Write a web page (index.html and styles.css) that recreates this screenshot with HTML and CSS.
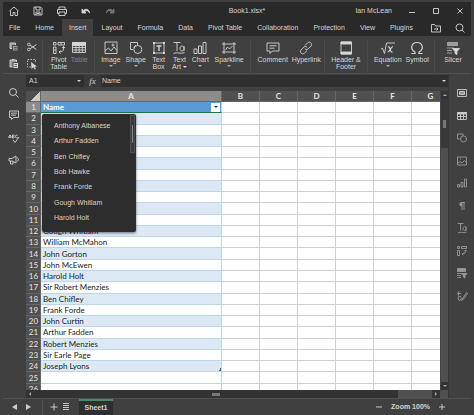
FILE: index.html
```
<!DOCTYPE html>
<html lang="en">
<head>
<meta charset="utf-8">
<title>Book1.xlsx</title>
<link rel="stylesheet" href="styles.css">
</head>
<body>
<div class="app">
  <header class="top">
    <div class="titlebar">
      <div class="quick">
        <button aria-label="Home"><svg viewBox="0 0 12 12"><path d="M1.500 6 6 2l4.500 4M2.500 5.500V10.500h2.500V7.500h2v3h2.500V5.500"/></svg></button>
        <button aria-label="Save"><svg viewBox="0 0 12 12"><path d="M2 2h6.500L10 3.500V10H2zM4 2v3h4V2M4 10V7h4v3M4.500 8.500h3"/></svg></button>
        <button aria-label="Print"><svg viewBox="0 0 12 12"><path d="M3 4.500V2h6v2.500M3 8.500H1.500v-4h9v4H9M3 7h6v3.500H3z"/></svg></button>
        <button aria-label="Undo"><svg viewBox="0 0 12 12"><path class="fill" d="M2 4v4h4L4.600 6.600C6.500 5 8.500 5.500 9.500 8 9.500 4.500 6 3.200 3.400 5.400z"/></svg></button>
        <button aria-label="Redo" class="dim"><svg viewBox="0 0 12 12"><path class="fill" d="M10 4v4H6l1.400-1.400C5.500 5 3.500 5.500 2.500 8 2.500 4.500 6 3.200 8.600 5.400z"/></svg></button>
      </div>
      <h1 class="doc">Book1.xlsx*</h1>
      <div class="win">
        <span class="user">Ian McLean</span>
        <button aria-label="Minimize"><svg viewBox="0 0 12 12"><path d="M3 7.500h6"/></svg></button>
        <button aria-label="Maximize"><svg viewBox="0 0 12 12"><path d="M3.500 3.500h5v5h-5z"/></svg></button>
        <button aria-label="Close"><svg viewBox="0 0 12 12"><path d="m3.500 3.500 5 5m0-5-5 5"/></svg></button>
      </div>
    </div>
    <nav class="tabs">
      <button>File</button><button>Home</button><button class="on">Insert</button><button>Layout</button><button>Formula</button><button>Data</button><button>Pivot Table</button><button>Collaboration</button><button>Protection</button><button>View</button><button>Plugins</button>
      <div class="tabtools">
        <button aria-label="Open file location"><svg viewBox="0 0 12 12"><path d="M1.500 10V2.500h3l1 1.500h5v6zM4 7h4M6.500 5.500 8 7 6.500 8.500"/></svg></button>
        <button aria-label="Search"><svg viewBox="0 0 12 12"><circle cx="5.500" cy="5.500" r="3.500"/><path d="m8 8 2.500 2.500"/></svg></button>
      </div>
    </nav>
  </header>

  <div class="ribbon">
    <div class="group clip">
      <button aria-label="Copy"><svg viewBox="0 0 12 12"><path class="soft" d="M2 2h5.500v5.500H2z"/><path class="soft" stroke="#404040" d="M4.500 4.500H10V10H4.500z"/><path d="M6 6.500h3M6 8.200h3" stroke="#555"/></svg></button>
      <button aria-label="Cut"><svg viewBox="0 0 12 12"><circle cx="2.800" cy="3.500" r="1.300"/><circle cx="2.800" cy="8.500" r="1.300"/><path d="m4 4.200 6.500 4.300M4 7.800l6.500-4.300"/></svg></button>
      <button aria-label="Paste"><svg viewBox="0 0 12 12"><path class="soft" d="M2 2h6.500v7H2z"/><path d="M4 1.500h2.500"/><path class="fill" stroke="#404040" d="M5 4.500h5.500v6H5z"/><path d="M6.500 6.500h2.500M6.500 8.500h2.500" stroke="#555"/></svg></button>
      <button aria-label="Select"><svg viewBox="0 0 12 12"><path stroke-dasharray="1.500 1.300" d="M5 9H1.500V1.500H9.500V5"/><path class="fill" stroke="none" d="m5 4 6 4.500-2.300.2L10 11 8.700 11.500 7.500 9.300 5.500 11z"/></svg></button>
    </div>
    <div class="group pivot">
      <button><svg viewBox="0 0 14 14"><path d="M1.500 1.500h2.500V4H1.500zM6 1.500h6.500V4H6zM9 1.500V4M1.500 6h2.500v6.500H1.500zM1.500 9H4M11.500 5.500v2.500q0 3-4.500 3M10 7l1.500-1.500L13 7M8.500 9.500 7 11l1.500 1.500"/></svg><span>Pivot<br>Table</span></button>
      <button class="off"><svg viewBox="0 0 14 14"><path class="fill" d="M.5 1.500h13v3H.5z"/><path d="M.5 1.500h13v10H.5zM.5 6.500h13M.5 9h13M4 4v7.500M7.200 4v7.500M10.400 4v7.500"/></svg><span>Table</span></button>
    </div>
    <div class="group draw">
      <button><svg viewBox="0 0 14 14"><path d="M1 1h12v11.500H1zM1 10l3.500-3 2.500 3 3-4 3 3.500"/><circle cx="9" cy="4" r="1"/></svg><span>Image</span><i></i></button>
      <button><svg viewBox="0 0 14 14"><path d="M4 8.500H1.500v-7h7V4M4.500 6.500 7 4"/><circle cx="8.800" cy="8.500" r="4"/></svg><span>Shape</span><i></i></button>
      <button><svg viewBox="0 0 14 14"><path d="M2 2h10v10H2z"/><path class="fill" stroke="none" d="M1 1h2v2H1zM11 1h2v2h-2zM1 11h2v2H1zM11 11h2v2h-2z"/><path stroke-width="1.400" d="M4.500 5h5M7 5v5"/></svg><span>Text<br>Box</span></button>
      <button><svg viewBox="0 0 14 14"><path d="M1.500 1.500h7M5 1.500v8.500M12 5v5M12 7.500c0-3.300-4-3.300-4 0s4 3.300 4 0M1.500 12.500c4-2 7 1 11-1"/></svg><span>Text<br>Art <b class="caret"></b></span></button>
      <button><svg viewBox="0 0 14 14"><path d="M1 8h3v4.500H1zM5.500 5h3v7.500h-3zM10 1.500h3v11h-3z"/></svg><span>Chart</span><i></i></button>
      <button><svg viewBox="0 0 14 14"><path d="M0 3h14M0 11h14M2 1v12M12 1v12M3.500 9 5.500 6l2 2L10.500 5"/></svg><span>Sparkline</span><i></i></button>
    </div>
    <div class="group link">
      <button><svg viewBox="0 0 14 14"><path d="M1 2h12v8H6.500L4 12.500V10H1zM3.500 4.800h7M3.500 7.200h5"/></svg><span>Comment</span></button>
      <button><svg viewBox="0 0 14 14"><path d="M6 4.500 8.700 1.800c2-2 5.300 1.200 3.300 3.300L9.200 7.800C8 9 6.500 8.500 5.800 7.500M8 9.500 5.300 12.200c-2 2-5.300-1.200-3.300-3.300L4.800 6.200C6 5 7.500 5.500 8.200 6.500"/></svg><span>Hyperlink</span></button>
    </div>
    <div class="group one">
      <button><svg viewBox="0 0 14 14"><path d="M2 1h10.500v12H2z"/><path class="fill" d="M2 1h10.500v2H2zM2 11h10.500v2H2z"/></svg><span>Header &amp;<br>Footer</span></button>
    </div>
    <div class="group sym">
      <button><svg viewBox="0 0 14 14"><path d="m0 8 1.500-.8L3.500 12.500 5.500 2H14"/><path stroke-width="1.200" d="M7 6c2.500-1.200 2 6 4.500 5M12 5.500C10 5.500 9 11 6.500 11"/></svg><span>Equation</span><i></i></button>
      <button><svg viewBox="0 0 14 14"><path stroke-width="1.200" d="M1.500 12.500H5V11C-.5 8 1.500 1.500 7 1.500S14.500 8 9 11v1.500h3.500"/></svg><span>Symbol</span></button>
    </div>
    <div class="group one">
      <button><svg viewBox="0 0 14 14"><path class="soft" stroke="#aaa" d="M1.500 1.500h10v3h-10z"/><path stroke="#aaa" d="M1 7h7M1 9.500h5M1 12h5"/><path class="fill" d="M6.500 7.500h7L11 10.500V13.500l-2-1V10.500z"/></svg><span>Slicer</span></button>
    </div>
  </div>

  <div class="work">
    <aside class="side left">
      <button aria-label="Find"><svg viewBox="0 0 12 12"><circle cx="5" cy="5" r="3.500"/><path d="m7.500 7.500 3 3"/></svg></button>
      <button aria-label="Comments"><svg viewBox="0 0 12 12"><path d="M1.500 2h9v6.500H5.500L3.500 10.500v-2h-2zM3 4.200h6M3 6.200h5"/></svg></button>
      <button aria-label="Spelling"><svg viewBox="0 0 12 12"><path d="M1 6V4l1-1 1 1v2M1 5h2M4.500 6V3h1.200q1 .8 0 1.500.9.800 0 1.500zM9.500 3.500C8 2.500 7.500 3.500 7.500 4.500S8.500 6.500 9.500 5.500M5 8l2 2.500L11 5"/></svg></button>
      <button aria-label="Feedback"><svg viewBox="0 0 12 12"><path d="M1 4.500h3L8 2v7L4 7H1zM2.500 7v3h2.500V7.500M9.500 3.500q2 2 0 4"/></svg></button>
    </aside>

    <main class="center">
      <div class="formula">
        <input class="ref" aria-label="Cell reference" value="A1">
        <b class="caret"></b>
        <button class="fx" aria-label="Insert function">fx</button>
        <input class="expr" aria-label="Formula" value="Name">
        <b class="caret"></b>
      </div>
      <div class="view">
        <div class="sheet">
          <table>
            <colgroup><col class="num"><col class="wide"><col class="col"><col class="col"><col class="col"><col class="col"><col class="col"><col class="col"></colgroup>
            <thead><tr><th class="corner"></th><th class="sel">A</th><th>B</th><th>C</th><th>D</th><th>E</th><th>F</th><th>G</th></tr></thead>
            <tbody>
              <tr class="head"><th class="sel">1</th><td><div class="cell">Name<button class="filter" aria-label="Filter"><b class="caret"></b></button></div></td><td></td><td></td><td></td><td></td><td></td><td></td></tr>
              <tr class="band"><th>2</th><td></td><td></td><td></td><td></td><td></td><td></td><td></td></tr>
              <tr><th>3</th><td></td><td></td><td></td><td></td><td></td><td></td><td></td></tr>
              <tr class="band"><th>4</th><td></td><td></td><td></td><td></td><td></td><td></td><td></td></tr>
              <tr><th>5</th><td></td><td></td><td></td><td></td><td></td><td></td><td></td></tr>
              <tr class="band"><th>6</th><td></td><td></td><td></td><td></td><td></td><td></td><td></td></tr>
              <tr><th>7</th><td></td><td></td><td></td><td></td><td></td><td></td><td></td></tr>
              <tr class="band"><th>8</th><td></td><td></td><td></td><td></td><td></td><td></td><td></td></tr>
              <tr><th>9</th><td></td><td></td><td></td><td></td><td></td><td></td><td></td></tr>
              <tr class="band"><th>10</th><td></td><td></td><td></td><td></td><td></td><td></td><td></td></tr>
              <tr><th>11</th><td></td><td></td><td></td><td></td><td></td><td></td><td></td></tr>
              <tr class="band"><th>12</th><td>Gough Whitlam</td><td></td><td></td><td></td><td></td><td></td><td></td></tr>
              <tr><th>13</th><td>William McMahon</td><td></td><td></td><td></td><td></td><td></td><td></td></tr>
              <tr class="band"><th>14</th><td>John Gorton</td><td></td><td></td><td></td><td></td><td></td><td></td></tr>
              <tr><th>15</th><td>John McEwen</td><td></td><td></td><td></td><td></td><td></td><td></td></tr>
              <tr class="band"><th>16</th><td>Harold Holt</td><td></td><td></td><td></td><td></td><td></td><td></td></tr>
              <tr><th>17</th><td>Sir Robert Menzies</td><td></td><td></td><td></td><td></td><td></td><td></td></tr>
              <tr class="band"><th>18</th><td>Ben Chifley</td><td></td><td></td><td></td><td></td><td></td><td></td></tr>
              <tr><th>19</th><td>Frank Forde</td><td></td><td></td><td></td><td></td><td></td><td></td></tr>
              <tr class="band"><th>20</th><td>John Curtin</td><td></td><td></td><td></td><td></td><td></td><td></td></tr>
              <tr><th>21</th><td>Arthur Fadden</td><td></td><td></td><td></td><td></td><td></td><td></td></tr>
              <tr class="band"><th>22</th><td>Robert Menzies</td><td></td><td></td><td></td><td></td><td></td><td></td></tr>
              <tr><th>23</th><td>Sir Earle Page</td><td></td><td></td><td></td><td></td><td></td><td></td></tr>
              <tr class="band last"><th>24</th><td>Joseph Lyons</td><td></td><td></td><td></td><td></td><td></td><td></td></tr>
              <tr><th>25</th><td></td><td></td><td></td><td></td><td></td><td></td><td></td></tr>
              <tr><th>26</th><td></td><td></td><td></td><td></td><td></td><td></td><td></td></tr>
            </tbody>
          </table>
          <div class="menu">
            <ul>
              <li><button>Anthony Albanese</button></li>
              <li><button>Arthur Fadden</button></li>
              <li><button>Ben Chifley</button></li>
              <li><button>Bob Hawke</button></li>
              <li><button>Frank Forde</button></li>
              <li><button>Gough Whitlam</button></li>
              <li><button>Harold Holt</button></li>
            </ul>
            <div class="menubar"></div>
          </div>
        </div>
        <div class="vbar">
          <button aria-label="Scroll up"><b class="caret up"></b></button>
          <div class="vthumb"></div>
          <button aria-label="Scroll down"><b class="caret"></b></button>
        </div>
        <div class="hbar">
          <button aria-label="Scroll left"><b class="caret west"></b></button>
          <div class="hthumb"></div>
          <button aria-label="Scroll right"><b class="caret east"></b></button>
        </div>
      </div>
    </main>

    <aside class="side right">
      <button aria-label="Cell settings" class="bright"><svg viewBox="0 0 12 12"><path d="M1.500 2.500h9v7h-9z"/><path class="soft" d="M3.500 4.500h5v3h-5z"/></svg></button>
      <button aria-label="Table settings" class="bright"><svg viewBox="0 0 12 12"><path class="fill" d="M1.500 2.500h9V4h-9z"/><path d="M1.500 2.500h9v7h-9zM1.500 6.500h9M4.500 4v5.500M7.500 4v5.500"/></svg></button>
      <button aria-label="Shape settings"><svg viewBox="0 0 12 12"><path d="M4 7H1.500V2H7v2"/><circle cx="7.500" cy="7" r="3"/></svg></button>
      <button aria-label="Image settings"><svg viewBox="0 0 12 12"><path d="M1.500 2h9v8h-9zM1.500 8.500 4 6.500l2 1.500 2.500-2.500 2 2"/><path d="M4 4h1"/></svg></button>
      <button aria-label="Chart settings"><svg viewBox="0 0 12 12"><path d="M1.500 7.500h2V10h-2zM5 5.500h2V10H5zM8.500 2h2v8h-2z"/></svg></button>
      <button aria-label="Paragraph settings"><svg viewBox="0 0 12 12"><path class="fill" stroke="none" d="M6 2C2.500 2 2.500 6.500 6 6.500z"/><path d="M5.500 2.500H9M6 2v8M8 2v8"/></svg></button>
      <button aria-label="Text art settings"><svg viewBox="0 0 12 12"><path d="M1.500 1.500h6M4.500 1.500v7M10 4.500V9M10 6.500c0-2.700-3-2.700-3 0s3 2.700 3 0M2 10.800c3-1.600 5 .8 8.500-.6"/></svg></button>
      <button aria-label="Pivot table settings"><svg viewBox="0 0 12 12"><path d="M1.500 1.500h2v2h-2zM5.500 1.500h5v2h-5zM1.500 5.500h2v5h-2zM9.500 5v1.500q0 2.500-3.500 2.500M8.300 6.300 9.500 5l1.200 1.300M7.300 7.800 6 9l1.300 1.300"/></svg></button>
      <button aria-label="Slicer settings"><svg viewBox="0 0 12 12"><path class="soft" d="M1.500 1.500h8v3h-8z"/><path d="M1 6.500h5M1 8.500h4M1 10.500h4"/><path class="fill" d="M5.500 6.500h5.500L9 8.800V11L7.500 10.200V8.800z"/></svg></button>
      <button aria-label="Signature settings"><svg viewBox="0 0 12 12"><path d="M3 1C2.500 4 1.500 9 3 10.500 5.500 11.500 6.500 5.500 3 6.500M1 3.500h4M5.500 10.500 7 8l3.500-5.500 1 .8L8 8.700z"/></svg></button>
    </aside>
  </div>

  <footer class="status">
    <div class="nav"><button aria-label="Previous sheet"><b class="tri west"></b></button><button aria-label="Next sheet"><b class="tri"></b></button></div>
    <button aria-label="Add sheet"><svg viewBox="0 0 12 12"><path d="M6 2.500v7M2.500 6h7"/></svg></button>
    <button aria-label="Sheet list"><svg viewBox="0 0 12 12"><path d="M3 2.500h6M3 4.500h6M3 6.500h6M3 8.500h6"/></svg></button>
    <button class="sheettab">Sheet1</button>
    <div class="zoom">
      <button aria-label="Zoom out"><svg viewBox="0 0 12 12"><path d="M3 6h6"/></svg></button>
      <span>Zoom 100%</span>
      <button aria-label="Zoom in"><svg viewBox="0 0 12 12"><path d="M6 3v6M3 6h6"/></svg></button>
    </div>
  </footer>
</div>
</body>
</html>
```
FILE: styles.css
```
* { box-sizing: border-box; }
body { margin: 0; background: #404040; color: #d6d6d6; font: 7px/8px "Liberation Sans", Arial, sans-serif; }
button, input { font: inherit; color: inherit; background: none; border: 0; padding: 0; margin: 0; min-width: 0; }
button { display: flex; align-items: center; justify-content: center; white-space: nowrap; }
svg { width: 12px; height: 12px; fill: none; stroke: currentColor; stroke-width: .9; flex: none; display: block; }
svg .fill { fill: currentColor; }
svg .soft { fill: #999; }
.caret { display: block; width: 0; border: 2px solid transparent; border-top-color: currentColor; border-bottom: 0; }
.caret.up { transform: rotate(180deg); }
.caret.west { transform: rotate(90deg); }
.caret.east { transform: rotate(-90deg); }
.app { height: 100vh; display: flex; flex-direction: column; overflow: hidden; }

.top { background: #292929; margin: 2px 3px 0; }
.titlebar { height: 17px; display: grid; grid-template-columns: 1fr auto 1fr; align-items: center; }
.quick { display: flex; gap: 12px; padding-left: 5px; }
.quick .dim { color: #777; }
.doc { margin: 0; padding-left: 20px; font-size: 7px; font-weight: normal; }
.win { display: flex; justify-content: flex-end; align-items: center; gap: 12px; padding-right: 5px; }
.user { margin-right: 2px; }
.tabs { height: 17px; display: flex; gap: 1px; }
.tabs > button { padding: 0 7px; }
.tabs > button:first-child { padding-left: 6px; }
.tabs .on { background: #404040; }
.tabtools { margin-left: auto; display: flex; gap: 12px; padding-right: 5px; }

.ribbon { height: 38px; flex: none; margin: 0 3px; padding-top: 4px; display: grid; grid-template-columns: 40fr 52fr 156fr 74fr 43fr 67fr 36fr; border-bottom: 1px solid #505050; }
.group { display: grid; border-right: 1px solid #4b4b4b; margin-bottom: 2px; align-items: start; }
.group:last-child { border: 0; }
.group button { flex-direction: column; justify-content: flex-start; padding-top: 1px; line-height: 7px; }
.group svg { width: 14px; height: 14px; }
.group span { margin-top: 1px; text-align: center; }
.group i { margin-top: 2px; border: 2px solid transparent; border-top-color: #aaa; border-bottom: 0; }
.group span .caret { display: inline-block; vertical-align: middle; }
.off span { color: #808080; }
.clip { grid-template-columns: 20px 16px; grid-template-rows: 17px 17px; padding-left: 1px; }
.clip svg { width: 12px; height: 12px; }
.pivot { grid-template-columns: 22fr 20fr; padding: 0 5px; }
.draw { grid-template-columns: 24fr 26fr 20fr 22fr 20fr 38fr; padding: 0 2px 0 4px; }
.link { grid-template-columns: 36fr 32fr; padding: 0 2px 0 4px; }
.sym { grid-template-columns: 32fr 28fr; padding: 0 3px 0 4px; }

.work { flex: 1; min-height: 0; display: grid; grid-template-columns: 26px 1fr 26px; }
.side { display: flex; flex-direction: column; align-items: center; justify-content: space-between; padding-top: 13px; }
.side.left { padding-left: 2px; height: 92px; }
.side.right { color: #999; padding-bottom: 96px; border-left: 1px solid #353535; }
.side .bright { color: #ccc; }

.center { display: flex; flex-direction: column; min-width: 0; min-height: 0; }
.formula { height: 12px; margin-top: 1px; flex: none; display: flex; align-items: center; background: #303030; padding-right: 2px; }
.ref { width: 51px; padding-left: 3px; }
.fx { width: 17px; height: 12px; margin-left: 3px; background: #393939; font: italic 9px/10px "Liberation Serif", serif; }
.expr { flex: 1; padding-left: 1px; }
.view { flex: 1; min-height: 0; margin-top: 4px; display: grid; grid-template-columns: 1fr 8px; grid-template-rows: 1fr 8px; background: #505050; }
.sheet { position: relative; overflow: hidden; background: #fff; }
table { width: 424px; height: 304px; table-layout: fixed; border-collapse: separate; border-spacing: 0; font: 8px/10px Lato, "Open Sans", sans-serif; color: #1a1a1a; }
.num { width: 15px; }
.wide { width: 181px; }
.col { width: 38px; }
th, td { padding: 0; border-right: 1px solid #d0d0d0; border-bottom: 1px solid #d0d0d0; white-space: nowrap; }
th { background: #505050; color: #e6e6e6; border-color: #666; text-align: center; font-weight: bold; }
tbody th { font-weight: normal; padding-left: 1px; }
th.sel { background: #8c8c8c; }
.corner { background: linear-gradient(135deg, #505050 60%, #ccc 60%); }
td:nth-child(2) { padding-left: 2px; border-color: #bcd5ec; }
.band td:nth-child(2) { background: #dce9f5; }
.head td:nth-child(2) { background: #5b9bd5; color: #fff; font-weight: bold; border-bottom: 1px solid #217346; }
.last td:nth-child(2) { background: linear-gradient(135deg, transparent 50%, #2f5f9a 50%) right bottom / 3px 3px no-repeat #dce9f5; }
.cell { display: flex; align-items: center; justify-content: space-between; }
.filter { width: 9px; height: 9px; margin-right: 1px; background: #fff; color: #333; }

.menu { position: absolute; left: 16px; top: 23px; width: 94px; display: flex; justify-content: space-between; background: #2d2d2d; border-radius: 2px; box-shadow: 0 1px 3px #0008; padding: 1px 1px 6px 12px; }
.menu ul { list-style: none; margin: 3px 0 0; padding: 0; height: 108px; display: grid; grid-auto-rows: 1fr; align-items: center; }
.menubar { width: 5px; height: 38px; background: linear-gradient(#888, #888) center / 1px 18px no-repeat #3a3a3a; border: 1px solid #505050; }

.vbar { display: flex; flex-direction: column; border-left: 1px solid #444; }
.vbar button, .hbar button { width: 8px; height: 8px; background: #333; color: #aaa; flex: none; }
.vbar button { width: auto; }
.vthumb { height: 49px; background: linear-gradient(#777, #777) center / 3px 8px no-repeat #393939; }
.vbar button:last-child { margin-top: auto; }
.hbar { display: flex; }
.hthumb { width: 364px; background: linear-gradient(#777, #777) center / 8px 3px no-repeat #333; }
.hbar button:last-child { margin-left: auto; }

.status { height: 17px; flex: none; display: flex; align-items: center; border-top: 1px solid #505050; margin: 0 3px; }
.nav { display: flex; gap: 9px; padding: 0 11px 0 9px; border-right: 1px solid #505050; height: 16px; margin-right: 5px; }
.tri { border: 3px solid transparent; border-left: 5px solid #ccc; border-right: 0; }
.tri.west { transform: rotate(180deg); }
.sheettab { height: 16px; width: 34px; margin-left: 7px; background: #2f2f2f; border-top: 2px solid #4a8a66; font-weight: bold; align-self: start; }
.zoom { margin-left: auto; margin-right: 23px; display: flex; align-items: center; gap: 6px; font-weight: bold; }
```
